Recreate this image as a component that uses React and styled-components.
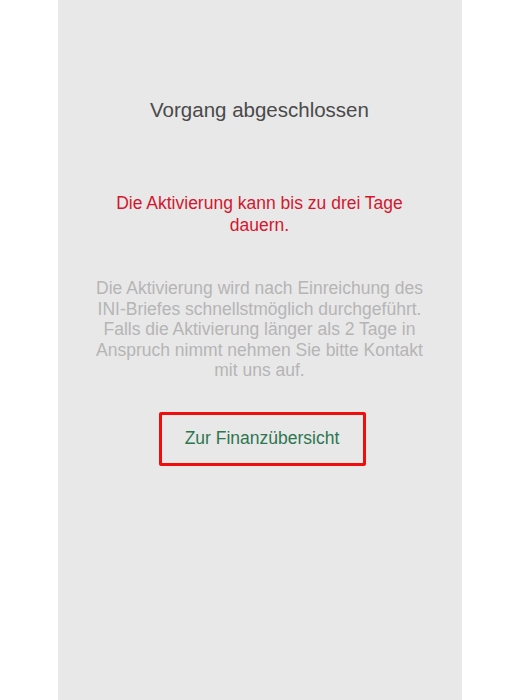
import React from 'react'
import styled, { createGlobalStyle } from 'styled-components'

const GlobalStyle = createGlobalStyle`
    html, body {
        margin: 0;
        padding: 0;
        background: #ffffff;
        height: 100%;
    }
    #root {
        height: 100%;
    }
`

const Page = styled.div`
    display: flex;
    justify-content: center;
    height: 700px;
    font-family: "Liberation Sans", Arial, sans-serif;
`

const Panel = styled.div`
    display: flex;
    flex-direction: column;
    align-items: center;
    width: 404px;
    margin-left: -6px;
    background: #e8e8e8;
    padding: 98px 30px 0;
    box-sizing: border-box;
`

const Title = styled.h2`
    margin: 0;
    font-size: 20.5px;
    line-height: 24px;
    font-weight: normal;
    color: #4a4a4a;
    text-align: center;
`

const Message = styled.p`
    margin: ${(p) => p.top}px 0 0;
    font-size: 17.5px;
    line-height: ${(p) => p.lh}px;
    color: ${(p) => p.color};
    text-align: center;
`

const ActionBox = styled.button`
    margin-top: 31px;
    margin-left: 5px;
    width: 207px;
    height: 54px;
    border: 3px solid #f20d0d;
    border-radius: 2px;
    background: transparent;
    font-family: inherit;
    font-size: 17.5px;
    color: #2d7650;
    cursor: pointer;
`

const App = () => {
    return (
        <Page>
            <GlobalStyle />
            <Panel>
                <Title>Vorgang abgeschlossen</Title>
                <Message top={70} lh={22} color='#d4162f'>
                    Die Aktivierung kann bis zu drei Tage dauern.
                </Message>
                <Message top={42} lh={20.5} color='#b5b5b5'>
                    Die Aktivierung wird nach Einreichung des INI-Briefes schnellstmöglich durchgeführt.
                    Falls die Aktivierung länger als 2 Tage in Anspruch nimmt nehmen Sie bitte Kontakt
                    mit uns auf.
                </Message>
                <ActionBox>Zur Finanzübersicht</ActionBox>
            </Panel>
        </Page>
    )
}

export default App
